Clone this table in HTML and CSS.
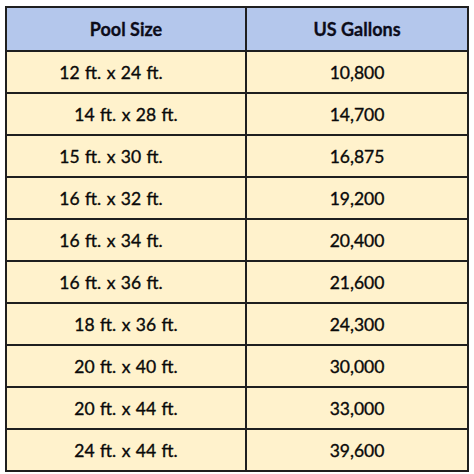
FILE: index.html
```html
<!DOCTYPE html>
<html>
<head>
<meta charset="utf-8">
<link rel="stylesheet" href="styles.css">
</head>
<body>
<table class="pools">
  <thead>
    <tr><th>Pool Size</th><th>US Gallons</th></tr>
  </thead>
  <tbody>
    <tr><td class="size shift">12 ft. x 24 ft.</td><td>10,800</td></tr>
    <tr><td class="size">14 ft. x 28 ft.</td><td>14,700</td></tr>
    <tr><td class="size shift">15 ft. x 30 ft.</td><td>16,875</td></tr>
    <tr><td class="size shift">16 ft. x 32 ft.</td><td>19,200</td></tr>
    <tr><td class="size shift">16 ft. x 34 ft.</td><td>20,400</td></tr>
    <tr><td class="size shift">16 ft. x 36 ft.</td><td>21,600</td></tr>
    <tr><td class="size">18 ft. x 36 ft.</td><td>24,300</td></tr>
    <tr><td class="size">20 ft. x 40 ft.</td><td>30,000</td></tr>
    <tr><td class="size">20 ft. x 44 ft.</td><td>33,000</td></tr>
    <tr><td class="size">24 ft. x 44 ft.</td><td>39,600</td></tr>
  </tbody>
</table>
</body>
</html>
```
FILE: styles.css
```css
html, body {
  margin: 0;
  padding: 0;
  background: #ffffff;
}
body {
  padding: 6px 0 0 5px;
  font-family: Lato, "Open Sans", sans-serif;
  color: #0a0a0a;
}
.pools {
  border-collapse: collapse;
  table-layout: fixed;
  width: 464px;
}
.pools th,
.pools td {
  border: 2px solid #1f1f1f;
  text-align: center;
  padding: 0;
  font-size: 17px;
}
.pools th:first-child,
.pools td:first-child {
  width: 238px;
}
.pools th {
  background: #b4c7ec;
  height: 42px;
  font-weight: bold;
  font-size: 18px;
  color: #0c0c1a;
  -webkit-text-stroke: 0.3px #0c0c1a;
}
.pools td {
  background: #fff2cc;
  height: 40px;
  font-size: 17.5px;
  word-spacing: 1px;
  -webkit-text-stroke: 0.35px #0a0a0a;
}
.pools td.shift {
  padding-right: 30px;
}
```
